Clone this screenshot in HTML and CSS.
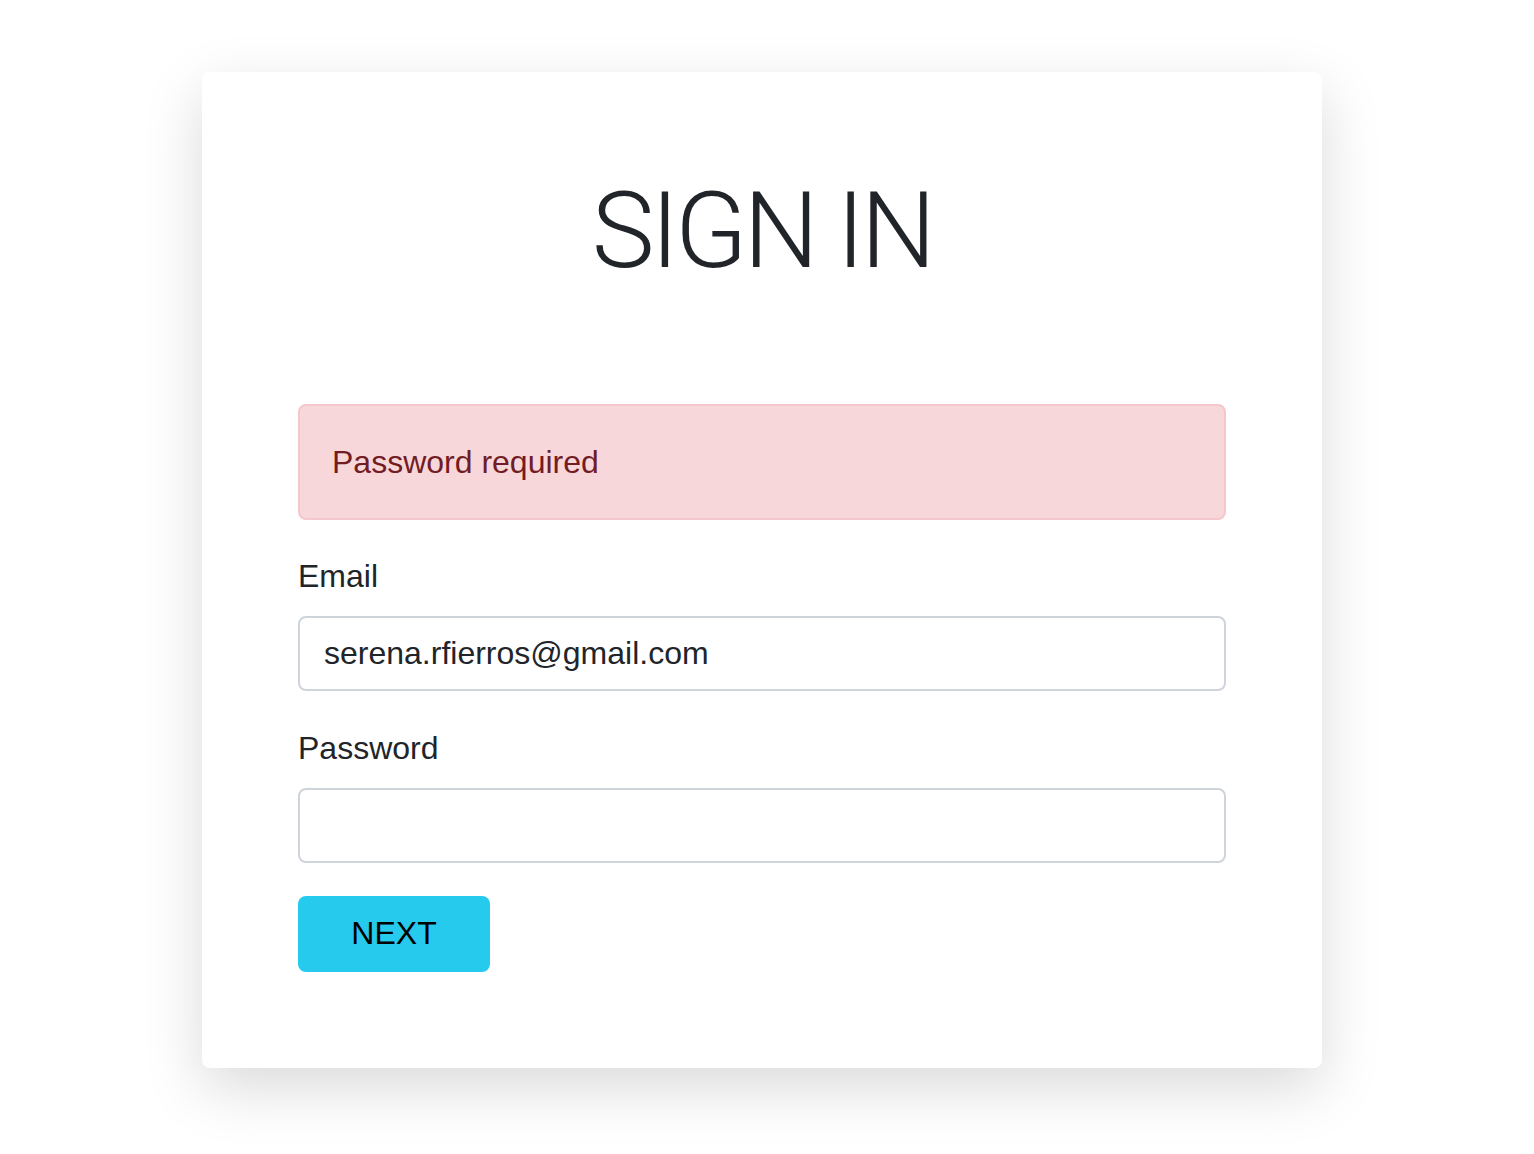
FILE: index.html
```html
<!DOCTYPE html>
<html>
<head>
<meta charset="utf-8">
<title>Sign in</title>
<link rel="stylesheet" href="styles.css">
</head>
<body>
<div class="page">
  <div class="card">
    <h1 class="title">SIGN IN</h1>
    <form class="login">
      <div class="alert">Password required</div>
      <div class="field">
        <label for="email">Email</label>
        <input id="email" class="control" type="text" value="serena.rfierros@gmail.com">
      </div>
      <div class="field">
        <label for="password">Password</label>
        <input id="password" class="control" type="password" value="">
      </div>
      <button type="button" class="btn">NEXT</button>
    </form>
  </div>
</div>
</body>
</html>
```

FILE: styles.css
```css
body {margin: 0; background: #fff; color: #212529; font-family: "Liberation Sans", Arial, sans-serif; font-size: 32px; line-height: 1.5;}
.page {display: flex; justify-content: center; padding: 72px 10px 86px 0;}
.card {width: 1120px; box-sizing: border-box; padding: 92px 96px 96px; background: #fff; border-radius: 8px; box-shadow: 0 20px 60px rgba(0,0,0,0.15);}
.title {margin: 0 0 105px; font-family: Roboto, "Liberation Sans", sans-serif; font-weight: 300; font-size: 106px; letter-spacing: -4px; line-height: 1.27; text-align: center;}
.alert {margin-bottom: 32px; padding: 32px 32px; background: #f8d7da; border: 2px solid #f5c6cb; border-radius: 8px; color: #721c24;}
.field {margin-bottom: 33px;}
.field label {display: block; margin-bottom: 16px;}
.control {display: block; width: 100%; height: 75px; box-sizing: border-box; padding: 0 24px; border: 2px solid #ced4da; border-radius: 8px; font-family: inherit; font-size: 32px; color: #212529; background: #fff;}
.btn {display: block; width: 192px; height: 76px; border: 0; border-radius: 8px; background: #26caed; color: #000; font-family: inherit; font-size: 32px;}
.field + .btn {margin-top: 2px;}
```
